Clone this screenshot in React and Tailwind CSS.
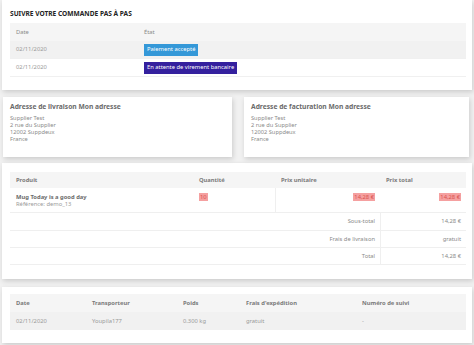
const TRACKING = [
  { date: "02/11/2020", label: "Paiement accepté", color: "bg-[#3498d8]" },
  { date: "02/11/2020", label: "En attente de virement bancaire", color: "bg-[#34209e]" },
];

const TOTALS = [
  { label: "Sous-total", value: "14,28 €", h: "h-[18px]" },
  { label: "Frais de livraison", value: "gratuit", h: "h-[17px]" },
  { label: "Total", value: "14,28 €", h: "h-[17px]" },
];

const SHIP_COLS = [
  { label: "Date", value: "02/11/2020", w: "w-[76px]" },
  { label: "Transporteur", value: "Youpila177", w: "w-[91px]" },
  { label: "Poids", value: "0.300 kg", w: "w-[63px]" },
  { label: "Frais d'expédition", value: "gratuit", w: "w-[116px]" },
  { label: "Numéro de suivi", value: "-", w: "flex-1" },
];

const ADDRESS = ["Supplier Test", "2 rue du Supplier", "12002 Suppdeux", "France"];

function Card({ className, children }) {
  return (
    <div className={`bg-white shadow-[1px_2px_5px_rgba(0,0,0,0.16)] ${className}`}>
      {children}
    </div>
  );
}

function Address({ title, className }) {
  return (
    <Card className={`h-[60px] pt-[6px] px-[7px] ${className}`}>
      <h3 className="text-[6.7px] leading-[8px] font-bold text-[#6b6b6b] mb-[4px]">{title}</h3>
      {ADDRESS.map(line => (
        <p key={line} className="text-[5.7px] leading-[7px] text-[#8a8a8a]">{line}</p>
      ))}
    </Card>
  );
}

function Hl({ children }) {
  return <span className="bg-[#f5a0a0] text-[#d9534f] px-[1px]">{children}</span>;
}

export default function App() {
  return (
    <div className="w-[474px] h-[345px] overflow-hidden bg-[#f1f1f1] font-['Noto_Sans',sans-serif] text-[#7a7a7a] text-[5.8px]">
      <Card className="mx-[2px] pt-[9px] px-[8px] pb-[13px]">
        <h2 className="text-[6.6px] leading-[10px] font-bold uppercase text-[#232323] mb-[4px]">
          Suivre votre commande pas à pas
        </h2>
        <div className="w-[456px]">
          <div className="flex items-center h-[18px] bg-[#f5f5f5] text-[#8a8a8a]">
            <div className="w-[128px] pl-[6px]">Date</div>
            <div className="pl-[6px]">État</div>
          </div>
          {TRACKING.map((row, i) => (
            <div key={row.label} className={`flex items-center h-[18px] border-b border-[#f0f0f0] ${i === 0 ? "bg-[#f1f1f1]" : "bg-white"}`}>
              <div className="w-[128px] pl-[6px] text-[#9a9a9a]">{row.date}</div>
              <div className="pl-[6px]">
                <span className={`${row.color} text-white px-[3px] py-[2.5px] leading-[7px] inline-block`}>{row.label}</span>
              </div>
            </div>
          ))}
        </div>
      </Card>

      <div className="flex mt-[7px] ml-[3px]">
        <Address title="Adresse de livraison Mon adresse" className="w-[229px]" />
        <Address title="Adresse de facturation Mon adresse" className="w-[225px] ml-[12px]" />
      </div>

      <Card className="mx-[2px] mt-[6px] pt-[9px] px-[8px] pb-[14px]">
        <div className="w-[456px]">
          <div className="flex items-center h-[16px] bg-[#f5f5f5] font-bold">
            <div className="w-[183px] pl-[6px]">Produit</div>
            <div className="w-[82px] pl-[6px]">Quantité</div>
            <div className="w-[105px] pl-[6px]">Prix unitaire</div>
            <div className="flex-1 pl-[6px]">Prix total</div>
          </div>
          <div className="flex h-[25px] border-b border-[#efefef] leading-[7px]">
            <div className="w-[183px] pl-[6px] pt-[6px]">
              <p className="font-bold text-[#6b6b6b]">Mug Today is a good day</p>
              <p className="text-[#9a9a9a]">Référence: demo_13</p>
            </div>
            <div className="w-[82px] pl-[6px] pt-[6px]"><Hl>10</Hl></div>
            <div className="w-[105px] pr-[5px] pt-[6px] text-right border-l border-[#efefef]"><Hl>14,28 €</Hl></div>
            <div className="flex-1 pr-[5px] pt-[6px] text-right"><Hl>14,28 €</Hl></div>
          </div>
          {TOTALS.map(row => (
            <div key={row.label} className={`flex items-center ${row.h} border-b border-[#efefef] text-[#8a8a8a]`}>
              <div className="w-[370px] pr-[5px] text-right">{row.label}</div>
              <div className="flex-1 pr-[5px] text-right border-l border-[#efefef] h-full flex items-center justify-end">{row.value}</div>
            </div>
          ))}
        </div>
      </Card>

      <Card className="mx-[2px] mt-[8px] pt-[7px] px-[8px] pb-[13px]">
        <div className="w-[456px]">
          <div className="flex items-center h-[18px] bg-[#f5f5f5] font-bold">
            {SHIP_COLS.map(c => (
              <div key={c.label} className={`${c.w} pl-[6px]`}>{c.label}</div>
            ))}
          </div>
          <div className="flex items-center h-[18px] bg-[#f1f1f1] text-[#9a9a9a]">
            {SHIP_COLS.map(c => (
              <div key={c.label} className={`${c.w} pl-[6px]`}>{c.value}</div>
            ))}
          </div>
        </div>
      </Card>
    </div>
  );
}
